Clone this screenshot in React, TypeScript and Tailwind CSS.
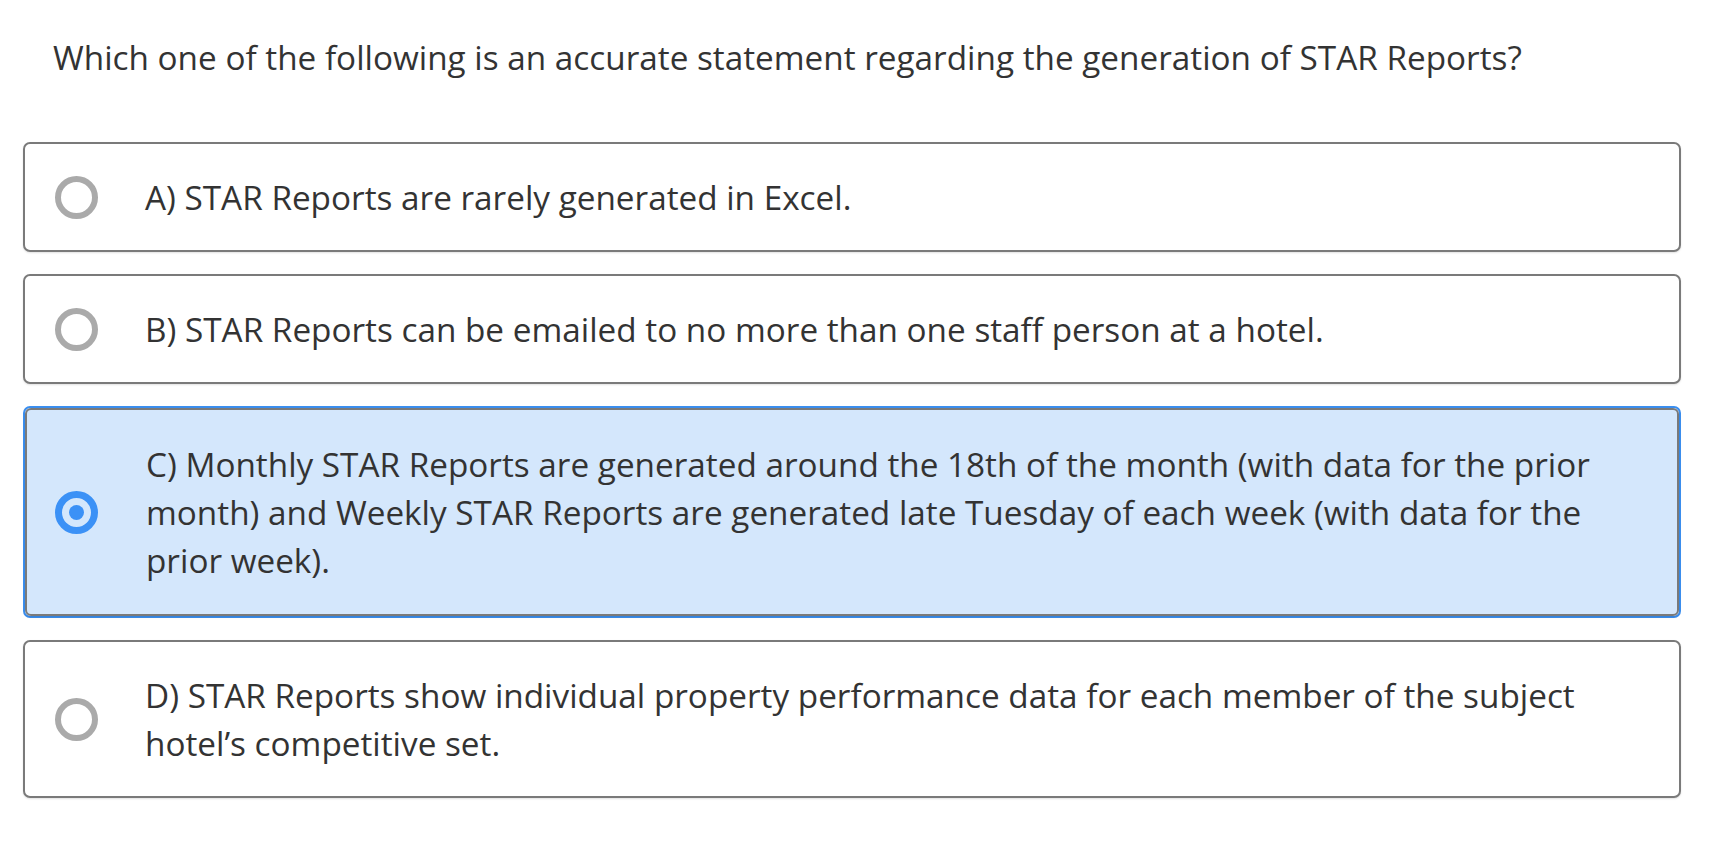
import React from "react";

type Opt = { text: string; selected?: boolean };

const options: Opt[] = [
  { text: "A) STAR Reports are rarely generated in Excel." },
  { text: "B) STAR Reports can be emailed to no more than one staff person at a hotel." },
  {
    text: "C) Monthly STAR Reports are generated around the 18th of the month (with data for the prior month) and Weekly STAR Reports are generated late Tuesday of each week (with data for the prior week).",
    selected: true,
  },
  { text: "D) STAR Reports show individual property performance data for each member of the subject hotel\u2019s competitive set." },
];

function Radio({ selected }: { selected?: boolean }) {
  if (selected) {
    return (
      <div className="w-[43px] h-[43px] shrink-0 rounded-full border-[7px] border-[#3b91f6] flex items-center justify-center bg-transparent">
        <div className="w-[15px] h-[15px] rounded-full bg-[#3b91f6]" />
      </div>
    );
  }
  return <div className="w-[43px] h-[43px] shrink-0 rounded-full border-[6px] border-[#aaaaaa] bg-white" />;
}

export default function App() {
  return (
    <div
      className="w-[1722px] h-[858px] bg-white text-[#333333] overflow-hidden"
      style={{ fontFamily: '"Open Sans", "Noto Sans", sans-serif' }}
    >
      <div className="pl-[53px] pt-[33px] text-[33.3px] leading-[48px]">
        Which one of the following is an accurate statement regarding the generation of STAR Reports?
      </div>
      <div className="ml-[23px] w-[1658px] mt-[61px] flex flex-col gap-[22px]">
        {options.map((o, i) =>
          o.selected ? (
            <div
              key={i}
              className="rounded-[7px] border-2 border-[#3b8ff0] bg-[#d4e7fc]"
            >
              <div className="rounded-[6px] border-2 border-[#7a7a7a] flex items-center py-[30px] pl-[28px] pr-[50px] shadow-sm">
                <Radio selected />
                <div className="ml-[48px] text-[33.3px] leading-[48px]">{o.text}</div>
              </div>
            </div>
          ) : (
            <div
              key={i}
              className="rounded-[7px] border-2 border-[#7a7a7a] bg-white flex items-center py-[29px] pl-[30px] pr-[60px] shadow-[0_1px_2px_rgba(0,0,0,0.12)]"
            >
              <Radio />
              <div className="ml-[47px] text-[33.3px] leading-[48px]">{o.text}</div>
            </div>
          )
        )}
      </div>
    </div>
  );
}
